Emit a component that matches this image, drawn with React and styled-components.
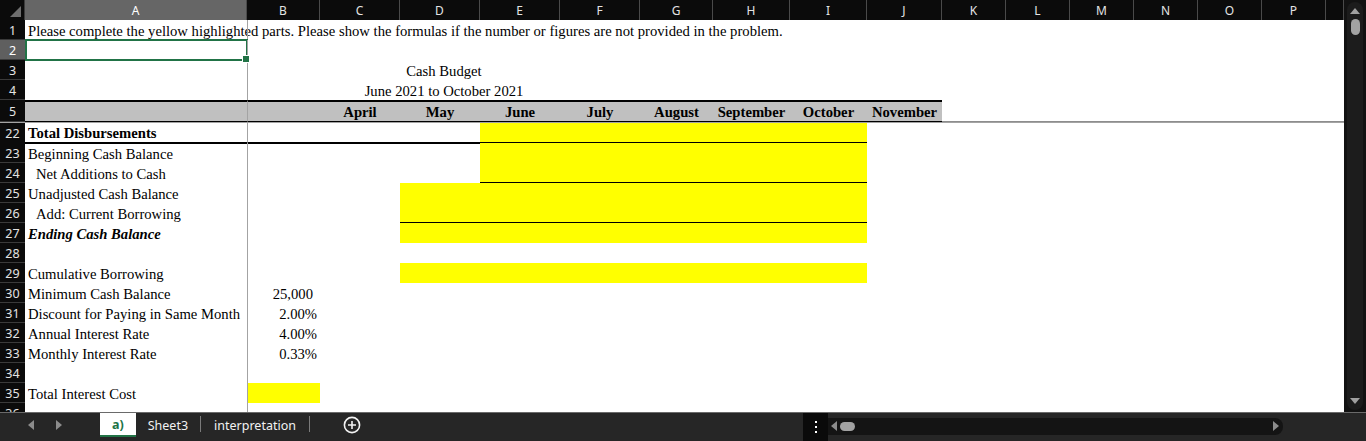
import React from 'react';
import styled, { createGlobalStyle, css } from 'styled-components';

const GREEN = '#217346';

const COLS = [
  ['A', 222], ['B', 73], ['C', 80], ['D', 80], ['E', 80], ['F', 80], ['G', 73], ['H', 77],
  ['I', 77], ['J', 75], ['K', 64], ['L', 64], ['M', 64], ['N', 64], ['O', 64], ['P', 64],
];
const LETTERS = COLS.map((c) => c[0]);
const TEMPLATE = `25px ${COLS.map((c) => `${c[1]}px`).join(' ')} 18px`;

// give every column from a to b the same cell props
const span = (a, b, props) =>
  Object.fromEntries(
    LETTERS.slice(LETTERS.indexOf(a), LETTERS.indexOf(b) + 1).map((k) => [k, { ...props }])
  );

const MONTHS = ['April', 'May', 'June', 'July', 'August', 'September', 'October', 'November'];

const ROWS = [
  { n: 1, cells: { A: { text: 'Please complete the yellow highlighted parts. Please show the formulas if the number or figures are not provided in the problem.' } } },
  { n: 2, selected: true, cells: {} },
  { n: 3, cells: { B: { text: 'Cash Budget', align: 'center', span: 5 } } },
  { n: 4, cells: { B: { text: 'June 2021 to October 2021', align: 'center', span: 5 } } },
  {
    n: 5,
    height: 21,
    cells: {
      ...span('A', 'J', { fill: 'gray', top: 2, bottom: 1 }),
      ...Object.fromEntries(
        MONTHS.map((m, i) => [LETTERS[i + 2], { text: m, bold: true, align: 'center', fill: 'gray', top: 2, bottom: 1 }])
      ),
    },
  },
  { freeze: true },
  {
    n: 22,
    cells: {
      ...span('A', 'I', { bottom: 2 }),
      ...span('E', 'I', { fill: 'yellow', bottom: 2 }),
      A: { text: 'Total Disbursements', bold: true, bottom: 2 },
    },
  },
  { n: 23, cells: { A: { text: 'Beginning Cash Balance' }, ...span('E', 'I', { fill: 'yellow' }) } },
  { n: 24, cells: { A: { text: 'Net Additions to Cash', indent: true }, ...span('E', 'I', { fill: 'yellow', bottom: 1 }) } },
  { n: 25, cells: { A: { text: 'Unadjusted Cash Balance' }, ...span('D', 'I', { fill: 'yellow' }) } },
  { n: 26, cells: { A: { text: 'Add: Current Borrowing', indent: true }, ...span('D', 'I', { fill: 'yellow', bottom: 1 }) } },
  { n: 27, cells: { A: { text: 'Ending Cash Balance', bold: true, italic: true }, ...span('D', 'I', { fill: 'yellow' }) } },
  { n: 28, cells: {} },
  { n: 29, cells: { A: { text: 'Cumulative Borrowing' }, ...span('D', 'I', { fill: 'yellow' }) } },
  { n: 30, cells: { A: { text: 'Minimum Cash Balance' }, B: { text: '25,000', align: 'right', pad: 7 } } },
  { n: 31, cells: { A: { text: 'Discount for Paying in Same Month' }, B: { text: '2.00%', align: 'right' } } },
  { n: 32, cells: { A: { text: 'Annual Interest Rate' }, B: { text: '4.00%', align: 'right' } } },
  { n: 33, cells: { A: { text: 'Monthly Interest Rate' }, B: { text: '0.33%', align: 'right' } } },
  { n: 34, cells: {} },
  { n: 35, cells: { A: { text: 'Total Interest Cost' }, B: { fill: 'yellow' } } },
  { n: 36, cells: {} },
];

const GlobalStyle = createGlobalStyle`
  html, body {
    margin: 0;
    padding: 0;
    background: #262626;
    overflow: hidden;
  }
  * { box-sizing: border-box; }
`;

const Window = styled.div`
  width: 1366px;
  height: 441px;
  display: flex;
  flex-direction: column;
  overflow: hidden;
`;

const Main = styled.div`
  display: flex;
  height: 412px;
`;

const Sheet = styled.div`
  width: 1344px;
  height: 412px;
  overflow: hidden;
  background: #fff;
`;

const HeaderRow = styled.div`
  display: grid;
  grid-template-columns: ${TEMPLATE};
  height: 20px;
  background: #0b0b0b;
  font-family: 'Noto Sans', 'Open Sans', sans-serif;
  font-size: 12px;
  color: #e4e4e4;
`;

const Corner = styled.div`
  position: relative;
  border-right: 1px solid #3c3c3c;
  &::after {
    content: '';
    position: absolute;
    right: 3px;
    bottom: 3px;
    border-style: solid;
    border-width: 0 0 11px 11px;
    border-color: transparent transparent #6e6e6e transparent;
  }
`;

const ColHead = styled.div`
  display: flex;
  align-items: center;
  justify-content: center;
  border-right: 1px solid #4a4a4a;
  background: ${(p) => (p.$active ? '#666666' : 'transparent')};
  color: ${(p) => (p.$active ? '#ffffff' : '#e4e4e4')};
`;

const Row = styled.div`
  display: grid;
  grid-template-columns: ${TEMPLATE};
  height: ${(p) => p.$h}px;
  font-family: 'Liberation Serif', 'Times New Roman', serif;
  font-size: 14.67px;
  color: #000;
`;

const FreezeLine = styled.div`
  height: 2px;
  background: #a3a3a3;
  border-top: 1px solid #8d8d8d;
`;

const RowHead = styled.div`
  display: flex;
  align-items: center;
  justify-content: center;
  padding-top: 1px;
  background: ${(p) => (p.$active ? '#5f5f5f' : '#0b0b0b')};
  border-bottom: 1px solid #3a3a3a;
  font-family: 'Noto Sans', 'Open Sans', sans-serif;
  font-size: 12.5px;
  color: ${(p) => (p.$active ? '#ffffff' : '#e4e4e4')};
`;

const fills = { yellow: '#ffff00', gray: '#c0c0c0' };

const Cell = styled.div`
  position: relative;
  display: flex;
  align-items: center;
  justify-content: ${(p) => ({ left: 'flex-start', right: 'flex-end', center: 'center' }[p.$align])};
  white-space: nowrap;
  overflow: visible;
  padding: 2px ${(p) => p.$pad}px 0 ${(p) => (p.$indent ? 11 : 3)}px;
  background: ${(p) => fills[p.$fill] || 'transparent'};
  font-weight: ${(p) => (p.$bold ? 700 : 400)};
  font-style: ${(p) => (p.$italic ? 'italic' : 'normal')};
  grid-column: span ${(p) => p.$span};
  border-top: ${(p) => (p.$top ? `${p.$top}px solid #000` : 'none')};
  border-bottom: ${(p) => (p.$bottom ? `${p.$bottom}px solid #000` : 'none')};
  ${(p) =>
    p.$freeze &&
    css`
      border-left: 1px solid #a3a3a3;
    `}
  ${(p) =>
    p.$selected &&
    css`
      &::after {
        content: '';
        position: absolute;
        inset: -1px -1px -1px 0;
        border: 2px solid ${GREEN};
        pointer-events: none;
      }
      &::before {
        content: '';
        position: absolute;
        right: -3px;
        bottom: -3px;
        width: 6px;
        height: 6px;
        background: ${GREEN};
        border: 1px solid #fff;
        z-index: 1;
      }
    `}
`;

function SheetRow({ row }) {
  const out = [];
  for (let i = 0; i < LETTERS.length; ) {
    const key = LETTERS[i];
    const c = row.cells[key] || {};
    const width = c.span || 1;
    out.push(
      <Cell
        key={key}
        $align={c.align || 'left'}
        $pad={c.pad ?? 3}
        $indent={c.indent}
        $fill={c.fill}
        $bold={c.bold}
        $italic={c.italic}
        $span={width}
        $top={c.top}
        $bottom={c.bottom}
        $freeze={key === 'B'}
        $selected={row.selected && key === 'A'}
      >
        {c.text}
      </Cell>
    );
    i += width;
  }
  return (
    <Row $h={row.height || 20}>
      <RowHead $active={row.selected}>{row.n}</RowHead>
      {out}
      <Cell $align="left" $pad={0} $span={1} />
    </Row>
  );
}

const VScroll = styled.div`
  width: 22px;
  background: #121212;
  padding: 2px 3px 2px 3px;
  display: flex;
`;

const VTrack = styled.div`
  flex: 1;
  background: #1c1c1c;
  border-radius: 8px;
  display: flex;
  flex-direction: column;
  align-items: center;
  padding-top: 6px;
`;

const Thumb = styled.div`
  width: ${(p) => p.$w}px;
  height: ${(p) => p.$h}px;
  background: #a2a2a2;
  border-radius: 5px;
  margin: ${(p) => p.$m};
`;

const Arrow = styled.div`
  width: 0;
  height: 0;
  border-style: solid;
  ${(p) => {
    const c = p.$color || '#9a9a9a';
    switch (p.$dir) {
      case 'up':
        return css`border-width: 0 5px 6px 5px; border-color: transparent transparent ${c} transparent;`;
      case 'down':
        return css`border-width: 6px 5px 0 5px; border-color: ${c} transparent transparent transparent;`;
      case 'left':
        return css`border-width: 5px 6px 5px 0; border-color: transparent ${c} transparent transparent;`;
      default:
        return css`border-width: 5px 0 5px 6px; border-color: transparent transparent transparent ${c};`;
    }
  }}
`;

const Spacer = styled.div`
  flex: 1;
`;

const BottomBar = styled.div`
  height: 29px;
  display: flex;
  align-items: stretch;
  background: #262626;
  border-top: 1px solid #6a6a6a;
  font-family: 'Noto Sans', 'Open Sans', sans-serif;
  font-size: 12.5px;
  color: #f2f2f2;
`;

const NavArrows = styled.div`
  width: 100px;
  display: flex;
  align-items: center;
  gap: 22px;
  padding-left: 28px;
  padding-bottom: 4px;
`;

const Tab = styled.div`
  display: flex;
  align-items: center;
  justify-content: center;
  height: 24px;
  padding: 0 ${(p) => p.$pad}px;
  background: ${(p) => (p.$active ? '#ffffff' : 'transparent')};
  color: ${(p) => (p.$active ? GREEN : '#f2f2f2')};
  font-weight: ${(p) => (p.$active ? 700 : 400)};
  border-bottom: ${(p) => (p.$active ? `2px solid ${GREEN}` : 'none')};
`;

const TabDivider = styled.div`
  width: 1px;
  height: 16px;
  margin-top: 3px;
  background: #7a7a7a;
`;

const AddSheet = styled.div`
  display: flex;
  align-items: center;
  padding: 0 0 4px 33px;
`;

const SplitHandle = styled.div`
  width: 25px;
  background: #0a0a0a;
  display: flex;
  align-items: center;
  justify-content: center;
`;

const HScroll = styled.div`
  width: 455px;
  display: flex;
  align-items: center;
  padding: 4px 0 6px;
`;

const HTrack = styled.div`
  flex: 1;
  height: 17px;
  background: #141414;
  border-radius: 0 8px 8px 0;
  display: flex;
  align-items: center;
  padding: 0 4px 0 3px;
`;

function PlusIcon() {
  return (
    <svg width="18" height="18" viewBox="0 0 18 18" fill="none" stroke="#f2f2f2" strokeWidth="1.6">
      <circle cx="9" cy="9" r="7.6" />
      <path d="M9 5v8M5 9h8" />
    </svg>
  );
}

function DotsIcon() {
  return (
    <svg width="4" height="14" viewBox="0 0 4 14" fill="#ffffff">
      <rect x="1" y="1" width="2" height="2" />
      <rect x="1" y="6" width="2" height="2" />
      <rect x="1" y="11" width="2" height="2" />
    </svg>
  );
}

export default function App() {
  return (
    <Window>
      <GlobalStyle />
      <Main>
        <Sheet>
          <HeaderRow>
            <Corner />
            {LETTERS.map((l) => (
              <ColHead key={l} $active={l === 'A'}>
                {l}
              </ColHead>
            ))}
            <ColHead />
          </HeaderRow>
          {ROWS.map((r, i) => (r.freeze ? <FreezeLine key={`f${i}`} /> : <SheetRow key={r.n} row={r} />))}
        </Sheet>
        <VScroll>
          <VTrack>
            <Arrow $dir="up" $color="#a0a0a0" />
            <Thumb $w={9} $h={16} $m="5px 0 0" />
            <Spacer />
            <Arrow $dir="down" $color="#a0a0a0" />
            <div style={{ height: 6 }} />
          </VTrack>
        </VScroll>
      </Main>
      <BottomBar>
        <NavArrows>
          <Arrow $dir="left" $color="#8c8c8c" />
          <Arrow $dir="right" $color="#8c8c8c" />
        </NavArrows>
        <Tab $active $pad={12}>a)</Tab>
        <Tab $pad={12}>Sheet3</Tab>
        <TabDivider />
        <Tab $pad={13}>interpretation</Tab>
        <TabDivider />
        <AddSheet>
          <PlusIcon />
        </AddSheet>
        <Spacer />
        <SplitHandle>
          <DotsIcon />
        </SplitHandle>
        <HScroll>
          <HTrack>
            <Arrow $dir="left" $color="#8c8c8c" />
            <Thumb $w={15} $h={9} $m="0 0 0 3px" />
            <Spacer />
            <Arrow $dir="right" $color="#8c8c8c" />
          </HTrack>
        </HScroll>
        <div style={{ width: 83 }} />
      </BottomBar>
    </Window>
  );
}
